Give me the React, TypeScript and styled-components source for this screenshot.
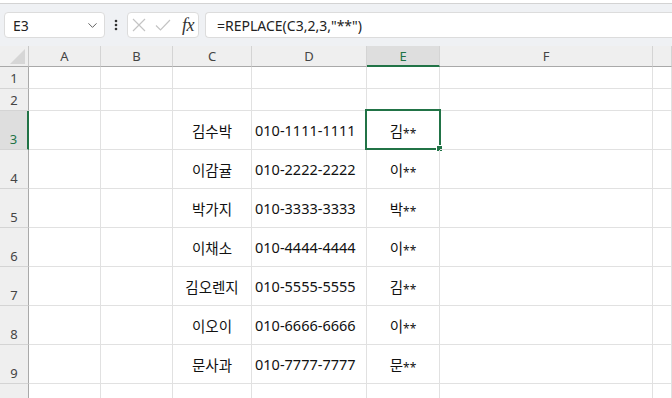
import styled, { createGlobalStyle } from 'styled-components';
import { ChevronDown } from 'lucide-react';

const GlobalStyle = createGlobalStyle`
    html, body {
        margin: 0;
        padding: 0;
        overflow: hidden;
        background: #ffffff;
        font-family: "Noto Sans", "Noto Sans CJK KR", sans-serif;
    }
`;

const GREEN = '#217346';
const GRID = '#e1e1e1';

const Page = styled.div`
    width: 672px;
    height: 398px;
    overflow: hidden;
`;

const RibbonEdge = styled.div`
    height: 3px;
    background: #ffffff;
    border-bottom: 1px solid #d3d3d3;
    box-shadow: 0 1px 1px rgba(0, 0, 0, 0.06);
`;

const FormulaBar = styled.div`
    display: flex;
    align-items: center;
    gap: 6px;
    padding: 8px 0 8px 4px;
    background: #eff1f4;
`;

const NameBox = styled.div`
    width: 101px;
    height: 26px;
    box-sizing: border-box;
    display: flex;
    align-items: center;
    justify-content: space-between;
    padding: 0 4px 0 8px;
    background: #ffffff;
    border: 1px solid #dcdcdc;
    border-radius: 4px;
    font-size: 14px;
    color: #222;
`;

const Dots = styled.div`
    width: 10px;
    display: flex;
    justify-content: center;
`;

const ActionBox = styled.div`
    width: 72px;
    height: 26px;
    box-sizing: border-box;
    display: flex;
    align-items: center;
    gap: 9px;
    padding: 0 4px;
    background: #ffffff;
    border: 1px solid #dcdcdc;
    border-radius: 4px;
`;

const Fx = styled.span`
    margin-left: 2px;
    font-family: "Liberation Serif", "DejaVu Serif", serif;
    font-style: italic;
    font-size: 18px;
    line-height: 1;
    color: #333;
    letter-spacing: -0.5px;
`;

const FormulaInput = styled.div`
    flex: 1;
    height: 26px;
    box-sizing: border-box;
    display: flex;
    align-items: center;
    padding-left: 11px;
    background: #ffffff;
    border: 1px solid #dcdcdc;
    border-right: none;
    border-radius: 4px 0 0 4px;
    font-size: 14px;
    color: #222;
`;

const Sheet = styled.div`
    display: grid;
    grid-template-columns: 29px 72px 72px 79px 115px 73px 213px 1fr;
    grid-auto-rows: auto;
`;

const Corner = styled.div`
    height: 21px;
    box-sizing: border-box;
    background: #efefef;
    border-right: 1px solid #c8c8c8;
    border-bottom: 1px solid #a9a9a9;
    display: flex;
    align-items: flex-end;
    justify-content: flex-end;
    padding: 0 3px 2px 0;
`;

const ColHead = styled.div<{ $active?: boolean }>`
    height: 21px;
    box-sizing: border-box;
    display: flex;
    align-items: center;
    justify-content: center;
    background: ${p => (p.$active ? '#dedede' : '#efefef')};
    border-right: 1px solid #d4d4d4;
    border-bottom: ${p => (p.$active ? `2px solid ${GREEN}` : '1px solid #a9a9a9')};
    font-size: 13px;
    color: ${p => (p.$active ? GREEN : '#444')};
`;

const RowHead = styled.div<{ $h: number; $active?: boolean }>`
    height: ${p => p.$h}px;
    box-sizing: border-box;
    display: flex;
    align-items: flex-end;
    justify-content: center;
    padding-bottom: 1px;
    background: ${p => (p.$active ? '#dedede' : '#efefef')};
    border-right: ${p => (p.$active ? `2px solid ${GREEN}` : '1px solid #a9a9a9')};
    border-bottom: 1px solid #d4d4d4;
    font-size: 13px;
    color: ${p => (p.$active ? GREEN : '#444')};
`;

const Cell = styled.div<{ $h: number; $align?: 'left' | 'center' }>`
    position: relative;
    height: ${p => p.$h}px;
    box-sizing: border-box;
    display: flex;
    align-items: center;
    justify-content: ${p => (p.$align === 'center' ? 'center' : 'flex-start')};
    padding-left: ${p => (p.$align === 'center' ? 0 : 3)}px;
    border-right: 1px solid ${GRID};
    border-bottom: 1px solid ${GRID};
    font-size: 14.5px;
    color: #111;
    white-space: nowrap;
`;

const Stars = styled.span`
    font-size: 12px;
    margin-top: 6px;
`;

const Selection = styled.div`
    position: absolute;
    left: -2px;
    top: -2px;
    right: -2px;
    bottom: -1px;
    border: 2px solid ${GREEN};
    pointer-events: none;
`;

const Handle = styled.div`
    position: absolute;
    right: -4px;
    bottom: -4px;
    width: 5px;
    height: 5px;
    background: ${GREEN};
    border: 1px solid #ffffff;
`;

const columns = ['A', 'B', 'C', 'D', 'E', 'F', 'G'];
const aligns: ('left' | 'center')[] = ['left', 'left', 'center', 'left', 'center', 'left', 'left'];

const people: [string, string, string][] = [
    ['김수박', '010-1111-1111', '김'],
    ['이감귤', '010-2222-2222', '이'],
    ['박가지', '010-3333-3333', '박'],
    ['이채소', '010-4444-4444', '이'],
    ['김오렌지', '010-5555-5555', '김'],
    ['이오이', '010-6666-6666', '이'],
    ['문사과', '010-7777-7777', '문'],
];

const rowHeights = [22, 22, 39, 39, 39, 39, 39, 39, 39, 39];

function cellValue(row: number, col: number) {
    const p = people[row - 3];
    if (!p) return null;
    if (col === 2) return p[0];
    if (col === 3) return p[1];
    if (col === 4) return (
        <>
            {p[2]}
            <Stars>**</Stars>
        </>
    );
    return null;
}

export default function App() {
    return (
        <Page>
            <GlobalStyle />
            <RibbonEdge />
            <FormulaBar>
                <NameBox>
                    <span>E3</span>
                    <ChevronDown size={15} strokeWidth={1.5} color="#555" />
                </NameBox>
                <Dots>
                    <svg width="4" height="12" viewBox="0 0 4 12">
                        <circle cx="2" cy="2" r="1.3" fill="#333" />
                        <circle cx="2" cy="6" r="1.3" fill="#333" />
                        <circle cx="2" cy="10" r="1.3" fill="#333" />
                    </svg>
                </Dots>
                <ActionBox>
                    <svg width="14" height="14" viewBox="0 0 14 14">
                        <path d="M1 1 L13 13 M13 1 L1 13" stroke="#c4c4c4" strokeWidth="1.2" fill="none" />
                    </svg>
                    <svg width="16" height="14" viewBox="0 0 16 14">
                        <path d="M1 7.5 L5.5 12 L15 2" stroke="#c4c4c4" strokeWidth="1.2" fill="none" />
                    </svg>
                    <Fx>fx</Fx>
                </ActionBox>
                <FormulaInput>=REPLACE(C3,2,3,"**")</FormulaInput>
            </FormulaBar>
            <Sheet>
                <Corner>
                    <svg width="15" height="15" viewBox="0 0 15 15">
                        <polygon points="15,0 15,15 0,15" fill="#d6d6d6" />
                    </svg>
                </Corner>
                {columns.map((c, i) => (
                    <ColHead key={c} $active={i === 4}>{i < 6 ? c : ''}</ColHead>
                ))}
                {rowHeights.map((h, r) => {
                    const row = r + 1;
                    return [
                        <RowHead key={'h' + row} $h={h} $active={row === 3}>{row}</RowHead>,
                        ...columns.map((c, ci) => (
                            <Cell key={c + row} $h={h} $align={aligns[ci]}>
                                {cellValue(row, ci)}
                                {row === 3 && ci === 4 && (
                                    <Selection>
                                        <Handle />
                                    </Selection>
                                )}
                            </Cell>
                        )),
                    ];
                })}
            </Sheet>
        </Page>
    );
}
